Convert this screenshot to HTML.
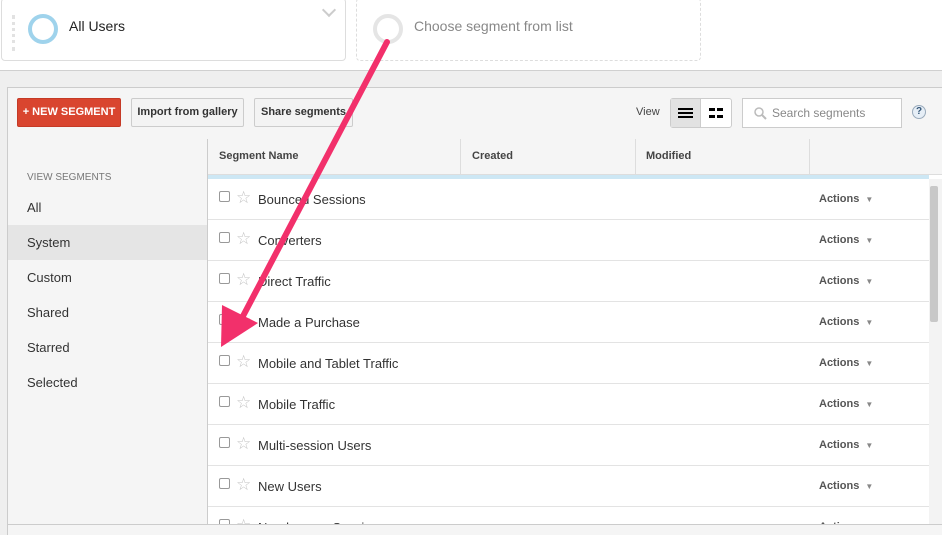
<!DOCTYPE html>
<html><head><style>
*{box-sizing:border-box;margin:0;padding:0}
html,body{width:942px;height:535px;overflow:hidden}
body{background:#efefef;font-family:"Liberation Sans",Arial,sans-serif;position:relative;color:#333}
.top{position:absolute;left:0;top:0;width:942px;height:71px;background:#fff;border-bottom:1px solid #d0d0d0}
.seg1{position:absolute;left:1px;top:-2px;width:345px;height:63px;border:1px solid #ddd;border-radius:4px;background:#fff}
.seg2{position:absolute;left:356px;top:-2px;width:345px;height:63px;border:1px dashed #ddd;border-radius:4px}
.ring{position:absolute;width:30px;height:30px;border-radius:50%}
.panel{position:absolute;left:7px;top:87px;width:940px;height:460px;background:#f5f5f5;border:1px solid #ccc}
.btn{position:absolute;top:98px;height:29px;border:1px solid #ccc;border-radius:2px;background:#f3f3f3;font-size:11px;font-weight:bold;color:#333;line-height:27px;text-align:center}
.side{position:absolute;font-size:13px;color:#333;left:27px}
.table{position:absolute;left:207px;top:139px;width:735px;height:385px;background:#fff;border-left:1px solid #ccc;overflow:hidden}
.hdr{position:absolute;left:0;top:0;width:735px;height:36px;background:#f5f5f5;border-bottom:1px solid #ddd}
.hdr span{position:absolute;top:11px;font-size:11px;font-weight:bold;color:#444}
.vl{position:absolute;top:0;width:1px;height:36px;background:#ddd}
.row{position:absolute;left:0;width:721px;height:41px;border-bottom:1px solid #e3e3e3}
.row .cb{position:absolute;left:11px;top:12px;width:11px;height:11px;border:1px solid #999;border-radius:2px}
.row .st{position:absolute;left:28px;top:9px;font-size:17px;color:#c4c4c4}
.row .nm{position:absolute;left:50px;top:13px;font-size:13px;color:#333}
.row .ac{position:absolute;left:611px;top:14px;font-size:11px;font-weight:bold;color:#555}
.row .ac i{font-style:normal;font-size:8px;color:#888;margin-left:6px}
</style></head><body>
<div class="top">
 <div class="seg1">
  <div style="position:absolute;left:10px;top:16px;width:3px;height:36px;border-left:3px dotted #e2e2e2"></div>
  <div class="ring" style="left:26px;top:15px;border:4px solid #9fd3ec"></div>
  <div style="position:absolute;left:67px;top:19px;font-size:14px;color:#222">All Users</div>
  <div style="position:absolute;left:322px;top:6px;width:10px;height:10px;border-right:2px solid #ccc;border-bottom:2px solid #ccc;transform:rotate(45deg)"></div>
 </div>
 <div class="seg2">
  <div class="ring" style="left:16px;top:15px;border:4px solid #e5e5e5"></div>
  <div style="position:absolute;left:57px;top:19px;font-size:14px;color:#888">Choose segment from list</div>
 </div>
</div>
<div class="panel"></div>
<div class="btn" style="left:17px;width:104px;background:#d9452f;border-color:#c53a26;color:#fff">+ NEW SEGMENT</div>
<div class="btn" style="left:131px;width:113px">Import from gallery</div>
<div class="btn" style="left:254px;width:99px">Share segments</div>
<div style="position:absolute;left:636px;top:106px;font-size:11px;color:#444">View</div>
<div style="position:absolute;left:670px;top:98px;width:62px;height:30px;border:1px solid #ccc;border-radius:3px;background:#fff"></div>
<div style="position:absolute;left:671px;top:99px;width:30px;height:28px;background:#e2e2e2;border-right:1px solid #ccc"></div>
<div style="position:absolute;left:678px;top:108px;width:15px;height:10px;border-top:2px solid #000;border-bottom:2px solid #000"><div style="margin-top:2px;height:2px;background:#000"></div></div>
<div style="position:absolute;left:709px;top:108px;width:6px;height:3px;background:#000"></div>
<div style="position:absolute;left:717px;top:108px;width:6px;height:3px;background:#000"></div>
<div style="position:absolute;left:709px;top:115px;width:6px;height:3px;background:#000"></div>
<div style="position:absolute;left:717px;top:115px;width:6px;height:3px;background:#000"></div>
<div style="position:absolute;left:742px;top:98px;width:160px;height:30px;border:1px solid #ccc;background:#fff"></div>
<svg style="position:absolute;left:753px;top:106px" width="14" height="14"><circle cx="6" cy="6" r="4" fill="none" stroke="#bbb" stroke-width="1.5"/><line x1="9" y1="9" x2="13" y2="13" stroke="#bbb" stroke-width="2"/></svg>
<div style="position:absolute;left:772px;top:106px;font-size:12px;color:#888">Search segments</div>
<div style="position:absolute;left:912px;top:105px;width:14px;height:14px;border-radius:50%;background:#e6eef6;border:1px solid #9ab;font-size:10px;font-weight:bold;color:#357;text-align:center;line-height:12px">?</div>
<div style="position:absolute;left:8px;top:140px;width:199px;height:384px;background:#f5f5f5"></div>
<div class="side" style="top:172px;font-size:10px;color:#777">VIEW SEGMENTS</div>
<div class="side" style="top:200px">All</div>
<div style="position:absolute;left:8px;top:225px;width:199px;height:35px;background:#e5e5e5"></div>
<div class="side" style="top:235px">System</div>
<div class="side" style="top:270px">Custom</div>
<div class="side" style="top:305px">Shared</div>
<div class="side" style="top:340px">Starred</div>
<div class="side" style="top:375px">Selected</div>
<div class="table">
 <div class="hdr"><span style="left:11px">Segment Name</span><div class="vl" style="left:252px"></div><span style="left:264px">Created</span><div class="vl" style="left:427px"></div><span style="left:438px">Modified</span><div class="vl" style="left:601px"></div></div>
 <div style="position:absolute;left:0;top:36px;width:721px;height:4px;background:#cde7f4"></div>
 <div class="row" style="top:40px"><div class="cb"></div><div class="st">☆</div><div class="nm">Bounced Sessions</div><div class="ac">Actions<i>▼</i></div></div>
 <div class="row" style="top:81px"><div class="cb"></div><div class="st">☆</div><div class="nm">Converters</div><div class="ac">Actions<i>▼</i></div></div>
 <div class="row" style="top:122px"><div class="cb"></div><div class="st">☆</div><div class="nm">Direct Traffic</div><div class="ac">Actions<i>▼</i></div></div>
 <div class="row" style="top:163px"><div class="cb"></div><div class="st">☆</div><div class="nm">Made a Purchase</div><div class="ac">Actions<i>▼</i></div></div>
 <div class="row" style="top:204px"><div class="cb"></div><div class="st">☆</div><div class="nm">Mobile and Tablet Traffic</div><div class="ac">Actions<i>▼</i></div></div>
 <div class="row" style="top:245px"><div class="cb"></div><div class="st">☆</div><div class="nm">Mobile Traffic</div><div class="ac">Actions<i>▼</i></div></div>
 <div class="row" style="top:286px"><div class="cb"></div><div class="st">☆</div><div class="nm">Multi-session Users</div><div class="ac">Actions<i>▼</i></div></div>
 <div class="row" style="top:327px"><div class="cb"></div><div class="st">☆</div><div class="nm">New Users</div><div class="ac">Actions<i>▼</i></div></div>
 <div class="row" style="top:368px"><div class="cb"></div><div class="st">☆</div><div class="nm">Non-bounce Sessions</div><div class="ac">Actions<i>▼</i></div></div>
 <div style="position:absolute;left:721px;top:40px;width:14px;height:345px;background:#f3f3f3"></div>
 <div style="position:absolute;left:722px;top:47px;width:8px;height:136px;background:#c8c8c8;border-radius:2px"></div>
</div>
<div style="position:absolute;left:8px;top:524px;width:934px;height:11px;background:#f5f5f5;border-top:1px solid #ccc"></div>
<svg style="position:absolute;left:0;top:0" width="942" height="535">
 <line x1="387" y1="42" x2="242" y2="318" stroke="#f2306b" stroke-width="6" stroke-linecap="round"/>
 <polygon points="221,347 222,305 258,323" fill="#f2306b"/>
</svg>
</body></html>
